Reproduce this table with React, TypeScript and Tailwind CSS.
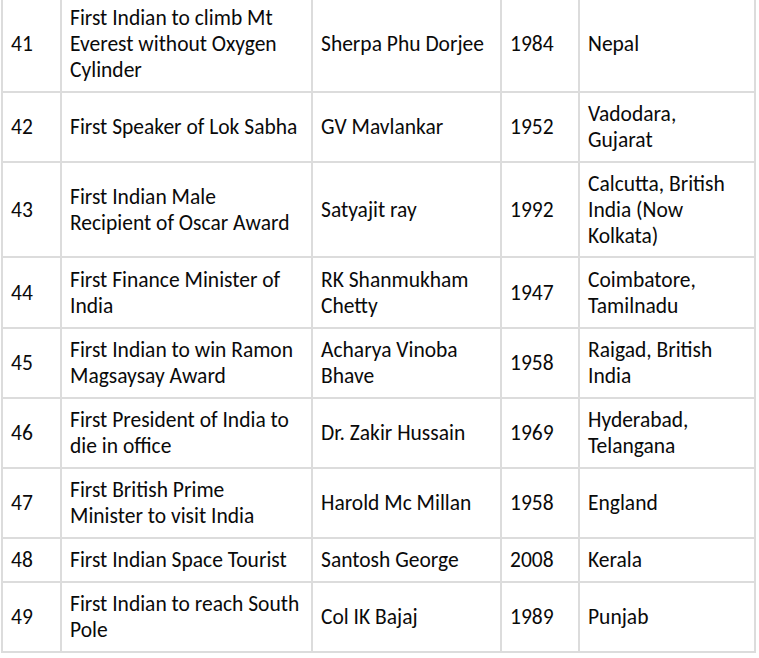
import React from "react";

type Row = { n: string; a: string[]; b: string[]; y: string; p: string[]; h: string };

const rows: Row[] = [
  { n: "41", a: ["First Indian to climb Mt", "Everest without Oxygen", "Cylinder"], b: ["Sherpa Phu Dorjee"], y: "1984", p: ["Nepal"], h: "h-[97px]" },
  { n: "42", a: ["First Speaker of Lok Sabha"], b: ["GV Mavlankar"], y: "1952", p: ["Vadodara,", "Gujarat"], h: "h-[70px]" },
  { n: "43", a: ["First Indian Male", "Recipient of Oscar Award"], b: ["Satyajit ray"], y: "1992", p: ["Calcutta, British", "India (Now", "Kolkata)"], h: "h-[95px]" },
  { n: "44", a: ["First Finance Minister of", "India"], b: ["RK Shanmukham", "Chetty"], y: "1947", p: ["Coimbatore,", "Tamilnadu"], h: "h-[71px]" },
  { n: "45", a: ["First Indian to win Ramon", "Magsaysay Award"], b: ["Acharya Vinoba", "Bhave"], y: "1958", p: ["Raigad, British", "India"], h: "h-[70px]" },
  { n: "46", a: ["First President of India to", "die in office"], b: ["Dr. Zakir Hussain"], y: "1969", p: ["Hyderabad,", "Telangana"], h: "h-[70px]" },
  { n: "47", a: ["First British Prime", "Minister to visit India"], b: ["Harold Mc Millan"], y: "1958", p: ["England"], h: "h-[70px]" },
  { n: "48", a: ["First Indian Space Tourist"], b: ["Santosh George"], y: "2008", p: ["Kerala"], h: "h-[44px]" },
  { n: "49", a: ["First Indian to reach South", "Pole"], b: ["Col IK Bajaj"], y: "1989", p: ["Punjab"], h: "h-[70px]" },
];

function Lines({ l }: { l: string[] }) {
  return (
    <>
      {l.map((t, i) => (
        <div key={i} className="whitespace-nowrap">
          {t}
        </div>
      ))}
    </>
  );
}

const cell = "border-2 border-[#dcdcdc] pl-[8px] pr-0 align-middle";

export default function App() {
  return (
    <div
      className="w-[759px] h-[658px] bg-white overflow-hidden text-[#0a0a0a] text-[21.5px] leading-[26px]"
      style={{ fontFamily: "Carlito, Calibri, Lato, 'Liberation Sans', sans-serif" }}
    >
      <table className="border-collapse ml-[1px] -mt-[6px] table-fixed w-[753px]">
        <colgroup>
          <col className="w-[59px]" />
          <col className="w-[251px]" />
          <col className="w-[189px]" />
          <col className="w-[78px]" />
          <col className="w-[176px]" />
        </colgroup>
        <tbody>
          {rows.map((r) => (
            <tr key={r.n} className={r.h}>
              <td className={cell}>{r.n}</td>
              <td className={cell}>
                <Lines l={r.a} />
              </td>
              <td className={cell}>
                <Lines l={r.b} />
              </td>
              <td className={cell}>{r.y}</td>
              <td className={cell}>
                <Lines l={r.p} />
              </td>
            </tr>
          ))}
        </tbody>
      </table>
    </div>
  );
}
